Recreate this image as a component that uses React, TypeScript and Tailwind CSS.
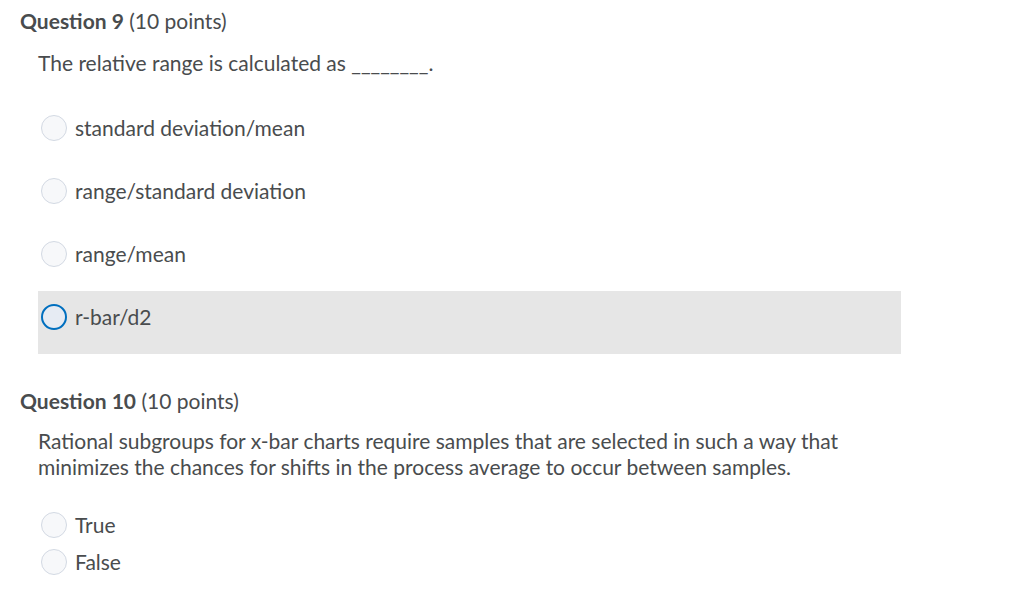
import { useState } from "react";

type Option = {
    label: string;
};

const Radio = ({ active }: { active: boolean }) => {
    return (
        <span
            className={
                "inline-block w-[26px] h-[26px] rounded-full shrink-0 box-border " +
                (active
                    ? "border-2 border-[#006fbf] bg-[#e6ebf3]"
                    : "border border-[#d3d9e3] bg-[#f7f8fa]")
            }
        />
    );
};

const Heading = ({ num }: { num: number }) => {
    return (
        <h2 className="text-[21px] leading-[24px] text-[#494c4e]">
            <b className="font-bold">Question {num}</b> (10 points)
        </h2>
    );
};

export default function App() {
    const [hovered] = useState<number>(3);
    const q9: Option[] = [
        { label: "standard deviation/mean" },
        { label: "range/standard deviation" },
        { label: "range/mean" },
        { label: "r-bar/d2" },
    ];

    return (
        <div className="w-[1024px] h-[609px] bg-white text-[#494c4e] font-['Lato','Liberation_Sans',sans-serif] pl-[20px] pt-[9px]">
            <Heading num={9} />
            <div className="pl-[18px]">
                <p className="text-[21px] leading-[26px] mt-[17px]">
                    The relative range is calculated as ________.
                </p>
                <ul className="mt-[26px] w-[863px]">
                    {q9.map((opt, i) => (
                        <li
                            key={i}
                            className={
                                "flex items-start gap-[8px] h-[63px] pt-[13px] pl-[3px] " +
                                (i === hovered ? "bg-[#e6e6e6]" : "")
                            }
                        >
                            <Radio active={i === hovered} />
                            <span className="text-[21px] leading-[26px]">
                                {opt.label}
                            </span>
                        </li>
                    ))}
                </ul>
            </div>
            <div className="mt-[35px]">
                <Heading num={10} />
            </div>
            <div className="pl-[18px]">
                <p className="text-[21px] leading-[26px] mt-[15px]">
                    Rational subgroups for x-bar charts require samples that are
                    selected in such a way that
                    <br />
                    minimizes the chances for shifts in the process average to
                    occur between samples.
                </p>
                <ul className="mt-[26px]">
                    {["True", "False"].map((label) => (
                        <li
                            key={label}
                            className="flex items-center gap-[8px] h-[37px] pl-[3px]"
                        >
                            <Radio active={false} />
                            <span className="text-[21px] leading-[26px]">
                                {label}
                            </span>
                        </li>
                    ))}
                </ul>
            </div>
        </div>
    );
}
